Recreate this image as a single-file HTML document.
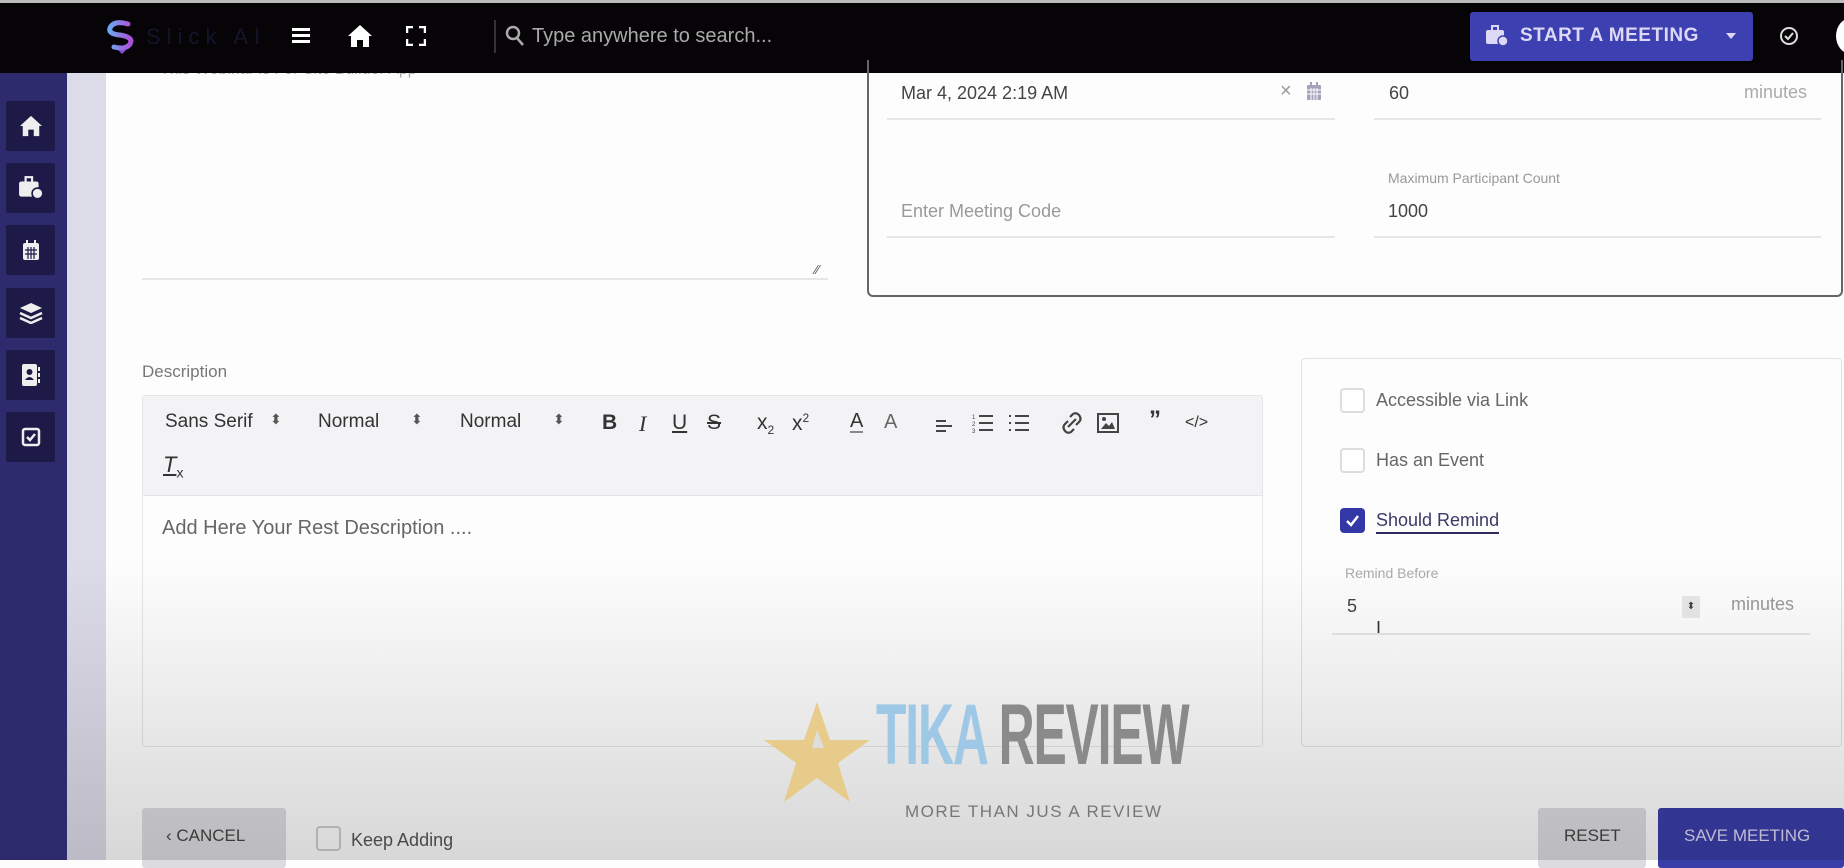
<!DOCTYPE html>
<html><head><meta charset="utf-8">
<style>
*{margin:0;padding:0;box-sizing:border-box}
body{width:1844px;height:860px;overflow:hidden;background:#fdfdfd;font-family:"Liberation Sans",sans-serif;position:relative;color:#444}
.a{position:absolute}
.top{left:0;top:0;width:1844px;height:73px;background:#060407;border-top:3px solid #bbb}
.side{left:0;top:73px;width:67px;height:787px;background:#2e2a6e}
.side0{left:0;top:0;width:67px;height:73px;background:#2e2a6e}
.strip{left:67px;top:73px;width:39px;height:787px;background:#dcdbe8}
.sb{left:6px;width:49px;height:50px;background:#1d1a47;border-radius:2px;display:flex;align-items:center;justify-content:center}
.ul{height:2px;background:#e6e6e9}
.t{white-space:nowrap}
.cb{width:25px;height:25px;border:2px solid #ddd;border-radius:4px;background:#fff}
.tb{top:411px;font-size:19px;color:#333}
</style></head><body>
<div class="a side0"></div>
<div class="a top"></div>
<svg class="a" style="left:104px;top:20px" width="36" height="34" viewBox="0 0 36 34"><defs><linearGradient id="g" x1="0" x2="1"><stop offset="0" stop-color="#6aa8f0"/><stop offset="1" stop-color="#b04fd8"/></linearGradient></defs><path d="M24 4 Q10 0 6 8 Q4 14 16 15 Q30 17 26 24 Q22 30 10 27" fill="none" stroke="url(#g)" stroke-width="5" stroke-linecap="round"/><path d="M14 30 L18 34 L22 30Z" fill="#8a4fd8"/></svg>
<div class="a t" style="left:146px;top:24px;font-size:22px;color:#14142a;letter-spacing:6px">Slick AI</div>
<div class="a" style="left:292px;top:28px;width:18px;height:3px;background:#fff;box-shadow:0 6px 0 #fff,0 12px 0 #fff"></div>
<svg class="a" style="left:347px;top:24px" width="26" height="24" viewBox="0 0 26 24"><path d="M13 1 L25 12 L22 12 L22 23 L16 23 L16 16 L10 16 L10 23 L4 23 L4 12 L1 12Z" fill="#fff"/></svg>
<svg class="a" style="left:406px;top:26px" width="20" height="20" viewBox="0 0 20 20"><path d="M1 7V1H7M13 1H19V7M19 13V19H13M7 19H1V13" fill="none" stroke="#fff" stroke-width="2.5"/></svg>
<div class="a" style="left:494px;top:20px;width:2px;height:33px;background:#333"></div>
<svg class="a" style="left:505px;top:25px" width="20" height="22" viewBox="0 0 20 22"><circle cx="8" cy="8" r="6" fill="none" stroke="#aaa" stroke-width="2.5"/><path d="M12 13L18 20" stroke="#aaa" stroke-width="2.5"/></svg>
<div class="a t" style="left:532px;top:25px;font-size:20px;color:#aaa">Type anywhere to search...</div>
<div class="a" style="left:1470px;top:12px;width:283px;height:49px;background:#3c40b0;border-radius:3px"></div>
<svg class="a" style="left:1485px;top:25px" width="24" height="22" viewBox="0 0 24 22"><rect x="1" y="5" width="18" height="14" rx="2" fill="#ddd8f5"/><rect x="7" y="1" width="6" height="5" fill="none" stroke="#ddd8f5" stroke-width="2"/><circle cx="18" cy="16" r="5" fill="#ddd8f5" stroke="#3c40b0" stroke-width="1.5"/></svg>
<div class="a t" style="left:1520px;top:25px;font-size:19px;font-weight:bold;color:#ddd8f5;letter-spacing:.5px">START A MEETING</div>
<div class="a" style="left:1726px;top:33px;border-left:5px solid transparent;border-right:5px solid transparent;border-top:6px solid #ddd8f5"></div>
<svg class="a" style="left:1779px;top:26px" width="20" height="20" viewBox="0 0 20 20"><circle cx="10" cy="10" r="8" fill="none" stroke="#ddd" stroke-width="2"/><path d="M6 10L9 13L14 7" fill="none" stroke="#ddd" stroke-width="2"/></svg>
<div class="a" style="left:1836px;top:18px;width:30px;height:36px;border-radius:50%;background:#fff"></div>

<div class="a side"></div>
<div class="a strip"></div>
<div class="a sb" style="top:101px"><svg width="24" height="22" viewBox="0 0 26 24"><path d="M13 1 L25 12 L22 12 L22 23 L16 23 L16 16 L10 16 L10 23 L4 23 L4 12 L1 12Z" fill="#eee"/></svg></div>
<div class="a sb" style="top:163px"><svg width="26" height="24" viewBox="0 0 24 22"><rect x="1" y="5" width="18" height="14" rx="2" fill="#eee"/><rect x="7" y="1" width="6" height="5" fill="none" stroke="#eee" stroke-width="2"/><circle cx="18" cy="16" r="5" fill="#eee" stroke="#1d1a47" stroke-width="1.5"/></svg></div>
<div class="a sb" style="top:225px"><svg width="18" height="22" viewBox="0 0 18 22"><rect x="1" y="4" width="16" height="17" rx="2" fill="#eee"/><rect x="4" y="1" width="2" height="5" fill="#eee"/><rect x="12" y="1" width="2" height="5" fill="#eee"/><path d="M3 11H15M3 15H15M6 8V20M9 8V20M12 8V20" stroke="#1d1a47" stroke-width="1.2"/></svg></div>
<div class="a sb" style="top:288px"><svg width="24" height="22" viewBox="0 0 24 22"><path d="M12 1L23 6L12 11L1 6Z" fill="#eee"/><path d="M1 11L12 16L23 11M1 16L12 21L23 16" fill="none" stroke="#eee" stroke-width="2.5"/></svg></div>
<div class="a sb" style="top:350px"><svg width="20" height="24" viewBox="0 0 20 24"><rect x="1" y="1" width="15" height="22" rx="2" fill="#eee"/><circle cx="8.5" cy="9" r="3" fill="#1d1a47"/><path d="M4 17Q8.5 11 13 17Z" fill="#1d1a47"/><rect x="17" y="4" width="2" height="4" fill="#eee"/><rect x="17" y="10" width="2" height="4" fill="#eee"/><rect x="17" y="16" width="2" height="4" fill="#eee"/></svg></div>
<div class="a sb" style="top:412px"><svg width="20" height="20" viewBox="0 0 20 20"><rect x="2" y="2" width="16" height="16" rx="2" fill="none" stroke="#eee" stroke-width="2.5"/><path d="M6 10L9 13L14 7" fill="none" stroke="#eee" stroke-width="2.5"/></svg></div>

<div class="a" style="left:160px;top:73px;height:5px;overflow:hidden"><div class="t" style="font-size:16px;color:#aaa;margin-top:-12px">This Webinar is For Site Builder App</div></div>
<div class="a ul" style="left:142px;top:278px;width:686px"></div>
<div class="a t" style="left:815px;top:262px;font-size:13px;color:#555">⁄⁄</div>

<div class="a" style="left:867px;top:60px;width:976px;height:237px;border:2px solid #666;border-top:none;border-radius:0 0 6px 6px"></div>
<div class="a t" style="left:901px;top:83px;font-size:18px;color:#444">Mar 4, 2024 2:19 AM</div>
<div class="a t" style="left:1280px;top:80px;font-size:20px;color:#999">×</div>
<svg class="a" style="left:1307px;top:82px" width="14" height="18" viewBox="0 0 14 18"><rect x="0" y="3" width="14" height="15" rx="1" fill="#a3a3bb"/><rect x="3" y="0" width="2" height="4" fill="#a3a3bb"/><rect x="9" y="0" width="2" height="4" fill="#a3a3bb"/><path d="M0 8H14M0 12H14M4 6V18M7 6V18M10 6V18" stroke="#fff" stroke-width="1"/></svg>
<div class="a ul" style="left:887px;top:118px;width:448px"></div>
<div class="a t" style="left:1389px;top:83px;font-size:18px;color:#444">60</div>
<div class="a t" style="left:1744px;top:82px;font-size:18px;color:#aaa">minutes</div>
<div class="a ul" style="left:1374px;top:118px;width:447px"></div>
<div class="a t" style="left:901px;top:201px;font-size:18px;color:#999">Enter Meeting Code</div>
<div class="a ul" style="left:887px;top:236px;width:448px"></div>
<div class="a t" style="left:1388px;top:170px;font-size:14px;color:#999">Maximum Participant Count</div>
<div class="a t" style="left:1388px;top:201px;font-size:18px;color:#444">1000</div>
<div class="a ul" style="left:1374px;top:236px;width:447px"></div>

<div class="a t" style="left:142px;top:362px;font-size:17px;color:#777">Description</div>
<div class="a" style="left:142px;top:395px;width:1121px;height:352px;border:1px solid #e6e6e6;border-radius:3px;background:#fdfdfd"></div>
<div class="a" style="left:143px;top:396px;width:1119px;height:100px;background:#f3f3f5;border-bottom:1px solid #e4e4e4"></div>
<div class="a t tb" style="left:165px">Sans Serif</div><div class="a t tb" style="left:270px;font-size:14px;color:#555">⬍</div>
<div class="a t tb" style="left:318px">Normal</div><div class="a t tb" style="left:411px;font-size:14px;color:#555">⬍</div>
<div class="a t tb" style="left:460px">Normal</div><div class="a t tb" style="left:553px;font-size:14px;color:#555">⬍</div>
<div class="a t tb" style="left:602px;font-weight:bold;font-size:21px">B</div>
<div class="a t tb" style="left:639px;font-style:italic;font-family:'Liberation Serif',serif;font-size:22px">I</div>
<div class="a t tb" style="left:672px;text-decoration:underline;font-size:21px">U</div>
<div class="a t tb" style="left:707px;text-decoration:line-through;font-size:21px">S</div>
<div class="a t tb" style="left:757px;font-size:21px">x<sub style="font-size:12px">2</sub></div>
<div class="a t tb" style="left:792px;font-size:21px">x<sup style="font-size:12px">2</sup></div>
<div class="a t tb" style="left:850px;font-size:20px;border-bottom:2px solid #888;line-height:20px">A</div>
<div class="a t tb" style="left:884px;font-size:20px;color:#666">A</div>
<svg class="a" style="left:934px;top:416px" width="20" height="20" viewBox="0 0 20 20"><path d="M2 5H12M2 10H18M2 15H12" stroke="#444" stroke-width="2"/></svg>
<svg class="a" style="left:972px;top:412px" width="22" height="22" viewBox="0 0 22 22"><path d="M7 4H21M7 11H21M7 18H21" stroke="#444" stroke-width="2"/><text x="0" y="7" font-size="6" fill="#444">1</text><text x="0" y="14" font-size="6" fill="#444">2</text><text x="0" y="21" font-size="6" fill="#444">3</text></svg>
<svg class="a" style="left:1008px;top:412px" width="22" height="22" viewBox="0 0 22 22"><path d="M7 4H21M7 11H21M7 18H21M1 4H3M1 11H3M1 18H3" stroke="#444" stroke-width="2"/></svg>
<svg class="a" style="left:1061px;top:412px" width="22" height="22" viewBox="0 0 22 22"><path d="M9 5L12 2Q15 0 18 3Q21 7 18 10L15 13M13 17L10 20Q7 22 4 19Q1 15 4 12L7 9M7 15L15 7" fill="none" stroke="#444" stroke-width="2.2"/></svg>
<svg class="a" style="left:1097px;top:413px" width="22" height="20" viewBox="0 0 22 20"><rect x="1" y="1" width="20" height="18" fill="none" stroke="#444" stroke-width="2"/><path d="M4 16L9 10L12 13L15 9L18 16Z" fill="#444"/><circle cx="7" cy="6" r="2" fill="#444"/></svg>
<div class="a t tb" style="left:1149px;font-weight:bold;font-size:24px;top:406px">”</div>
<div class="a t tb" style="left:1185px;font-size:16px;top:414px">&lt;/&gt;</div>
<div class="a t" style="left:163px;top:452px;font-size:22px;font-style:italic;color:#333;text-decoration:underline">T<sub style="font-size:14px;font-style:normal">x</sub></div>
<div class="a t" style="left:162px;top:517px;font-size:20px;color:#666">Add Here Your Rest Description ....</div>

<div class="a" style="left:1301px;top:358px;width:541px;height:389px;border:1px solid #e2e2e2;border-radius:4px"></div>
<div class="a cb" style="left:1340px;top:388px"></div>
<div class="a t" style="left:1376px;top:390px;font-size:18px;color:#666">Accessible via Link</div>
<div class="a cb" style="left:1340px;top:448px"></div>
<div class="a t" style="left:1376px;top:450px;font-size:18px;color:#666">Has an Event</div>
<div class="a" style="left:1340px;top:508px;width:25px;height:25px;background:#3438a6;border-radius:4px"></div>
<svg class="a" style="left:1345px;top:513px" width="15" height="15" viewBox="0 0 15 15"><path d="M2 8L6 12L13 3" fill="none" stroke="#fff" stroke-width="2.5"/></svg>
<div class="a t" style="left:1376px;top:510px;font-size:18px;color:#3a3a66;border-bottom:2px solid #2d2a60;padding-bottom:1px">Should Remind</div>
<div class="a t" style="left:1345px;top:565px;font-size:14px;color:#aaa">Remind Before</div>
<div class="a t" style="left:1347px;top:596px;font-size:18px;color:#444">5</div>
<div class="a t" style="left:1376px;top:618px;font-size:18px;color:#333">I</div>
<div class="a" style="left:1682px;top:596px;width:18px;height:22px;background:#e8e8e8;font-size:10px;text-align:center;line-height:22px;color:#444">⬍</div>
<div class="a t" style="left:1731px;top:594px;font-size:18px;color:#999">minutes</div>
<div class="a ul" style="left:1332px;top:633px;width:478px"></div>

<div class="a" style="left:142px;top:808px;width:144px;height:60px;background:#dcdcdf;border-radius:3px"></div>
<div class="a t" style="left:166px;top:826px;font-size:17px;color:#444">‹ CANCEL</div>
<div class="a" style="left:316px;top:826px;width:25px;height:25px;border:2px solid #ccc;border-radius:4px"></div>
<div class="a t" style="left:351px;top:830px;font-size:18px;color:#555">Keep Adding</div>
<div class="a" style="left:1538px;top:808px;width:108px;height:60px;background:#dcdcdf;border-radius:3px"></div>
<div class="a t" style="left:1564px;top:826px;font-size:17px;color:#444">RESET</div>
<div class="a" style="left:1658px;top:808px;width:186px;height:60px;background:#3a3ea8;border-radius:3px"></div>
<div class="a t" style="left:1684px;top:826px;font-size:17px;color:#ddd8f5">SAVE MEETING</div>

<div class="a" style="left:67px;top:560px;width:1777px;height:300px;background:linear-gradient(rgba(0,0,0,0),rgba(0,0,0,0.15));pointer-events:none"></div>

<svg class="a" style="left:762px;top:700px" width="110" height="104" viewBox="0 0 110 104"><path d="M55 2L68 40L108 40L76 63L88 102L55 78L22 102L34 63L2 40L42 40Z" fill="#e8c77a" opacity=".85"/><path d="M55 30L50 48L62 48Z" fill="#dedede"/></svg>
<div class="a t" style="left:876px;top:690px;font-size:86px;font-weight:bold;letter-spacing:-2px;transform:scaleX(.58);transform-origin:left top;line-height:90px"><span style="color:#9ec8e6">TIKA</span> <span style="color:#8a8a8a">REVIEW</span></div>
<div class="a t" style="left:905px;top:802px;font-size:17px;color:#777;letter-spacing:1.5px">MORE THAN JUS A REVIEW</div>
</body></html>
